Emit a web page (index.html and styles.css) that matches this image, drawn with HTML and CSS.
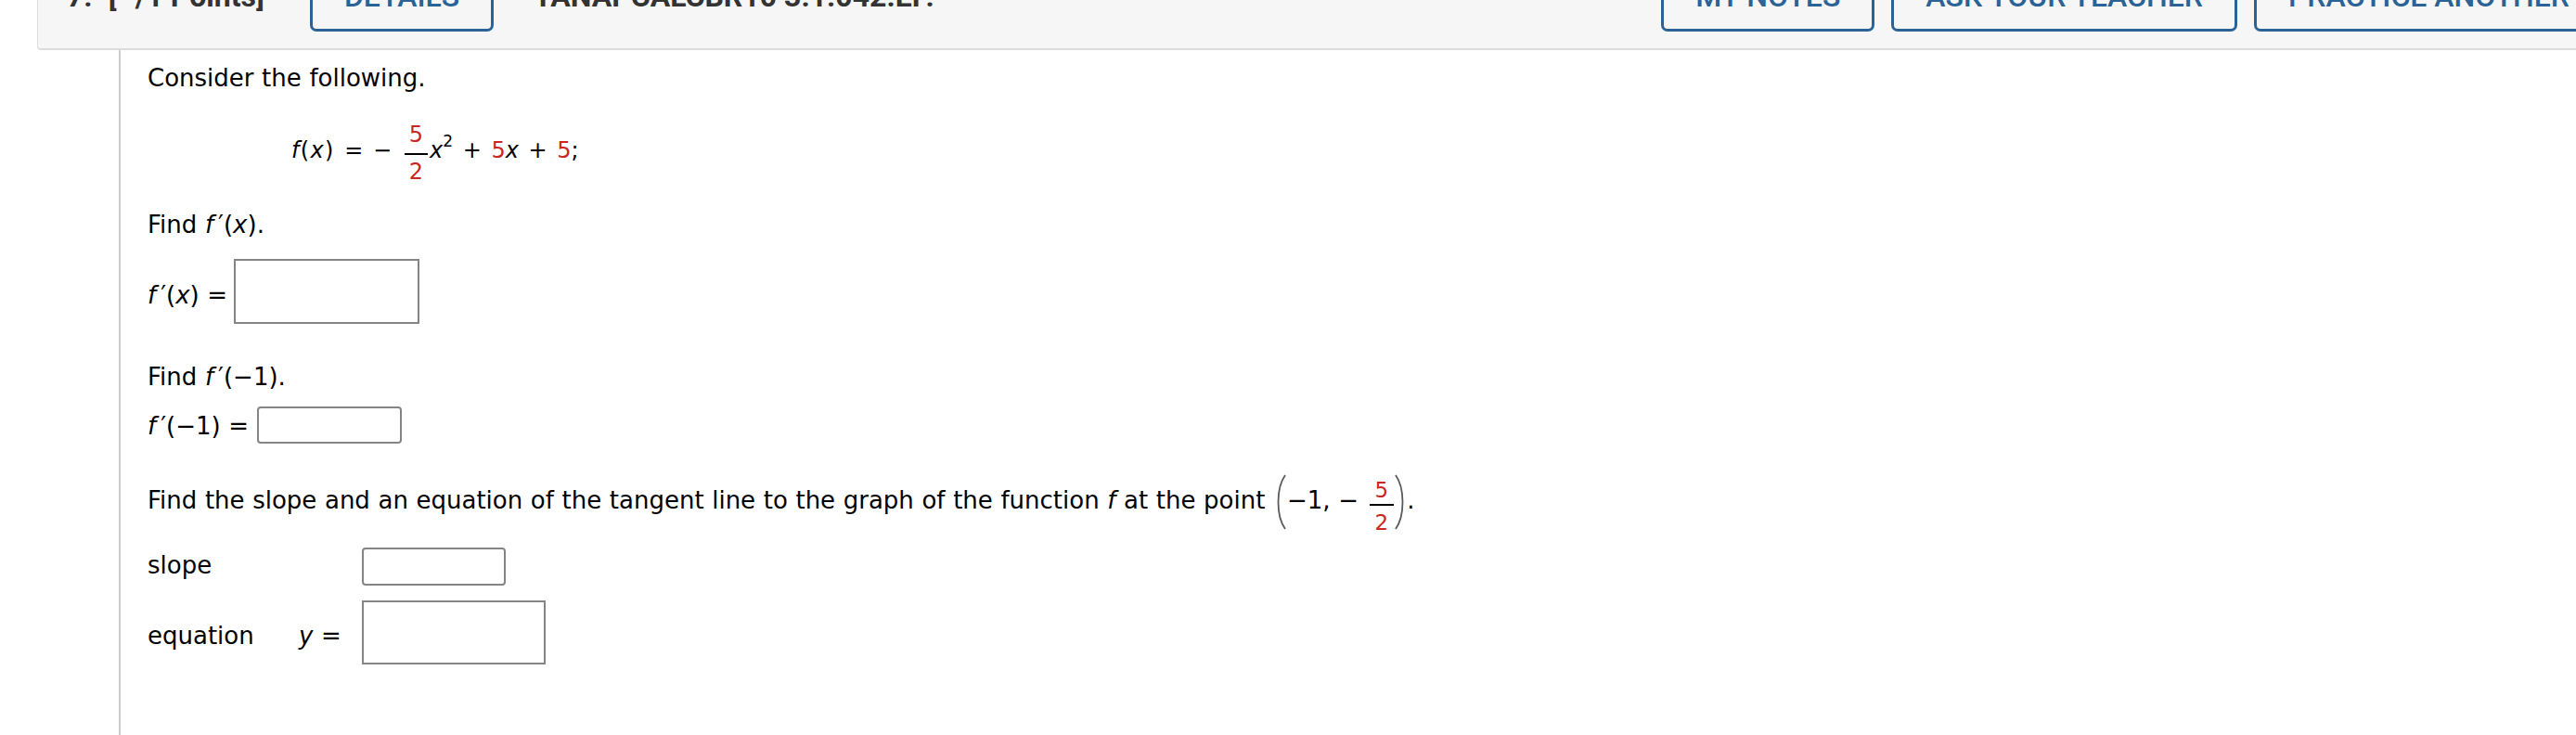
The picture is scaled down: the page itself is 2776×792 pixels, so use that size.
FILE: index.html
```html
<!DOCTYPE html>
<html lang="en">
<head>
<meta charset="utf-8">
<title>Question 7</title>
<link rel="stylesheet" href="styles.css">
</head>
<body>
<div class="page">
  <header class="qhead">
    <span class="qnum">7.</span>
    <span class="qpts">[–/1 Points]</span>
    <button class="hbtn hbtn-details" type="button">DETAILS</button>
    <span class="qid">TANAPCALCBR10 3.1.042.EP.</span>
    <div class="hactions">
      <button class="hbtn" type="button">MY NOTES</button>
      <button class="hbtn" type="button">ASK YOUR TEACHER</button>
      <button class="hbtn" type="button">PRACTICE ANOTHER</button>
    </div>
  </header>

  <main class="qbody">
    <p class="txt consider">Consider the following.</p>

    <p class="formula"><span class="fx"><i>f</i>(<i>x</i>)</span> = − <span class="frac"><span class="num red">5</span><span class="den red">2</span></span><i>x</i><sup class="sup">2</sup> + <span class="red">5</span><i>x</i> + <span class="red">5</span>;</p>

    <p class="txt find1">Find <i>f</i><span class="prime">′</span>(<i>x</i>).</p>

    <div class="ansrow row-fx">
      <span class="alabel lbl-fx"><i>f</i><span class="prime">′</span>(<i>x</i>) =</span>
      <input class="box box-fx" type="text" aria-label="f prime of x">
    </div>

    <p class="txt find2">Find <i>f</i><span class="prime">′</span>(−1).</p>

    <div class="ansrow row-f1">
      <span class="alabel lbl-f1"><i>f</i><span class="prime">′</span>(−1) =</span>
      <input class="box box-f1" type="text" aria-label="f prime of -1">
    </div>

    <p class="txt slopeq">Find the slope and an equation of the tangent line to the graph of the function <i>f</i> at the point <svg class="paren" width="15" height="60" viewBox="0 0 15 60" aria-hidden="true"><path d="M13 1 C3 15 3 45 13 59" fill="none" stroke="#5a5a5a" stroke-width="1.8"/></svg>−1, − <span class="frac frac-pt"><span class="num red">5</span><span class="den red">2</span></span><svg class="paren" width="14" height="60" viewBox="0 0 14 60" aria-hidden="true"><path d="M2 1 C12 15 12 45 2 59" fill="none" stroke="#5a5a5a" stroke-width="1.8"/></svg>.</p>

    <div class="answers">
      <span class="glabel lbl-slope">slope</span>
      <span class="gmid"></span>
      <input class="box box-slope" type="text" aria-label="slope">
      <span class="glabel lbl-eq">equation</span>
      <span class="gmid lbl-eq"><i>y</i> =</span>
      <input class="box box-eq" type="text" aria-label="equation">
    </div>
  </main>
</div>
</body>
</html>
```

FILE: styles.css
```css
html, body {
  margin: 0;
  padding: 0;
  background: #ffffff;
  overflow: hidden;
}

body {
  width: 2776px;
  height: 792px;
}

p {
  margin: 0;
}

.page {
  margin-top: -62px;
}

/* ---------- header ---------- */
.qhead {
  display: flex;
  align-items: center;
  box-sizing: border-box;
  width: 2786px;
  margin-left: 40px;
  padding: 20px 20px 18px 31px;
  background: #f6f6f6;
  border-left: 1px solid #dddddd;
  border-bottom: 2px solid #dcdcdc;
  border-bottom-left-radius: 4px;
  font-family: Roboto, "Liberation Sans", sans-serif;
  font-size: 32px;
  color: #333333;
}

.qnum,
.qpts,
.qid {
  font-weight: 700;
  white-space: nowrap;
}

.qpts {
  margin-left: 17px;
}

.qid {
  margin-left: 43px;
}

.hbtn {
  box-sizing: border-box;
  height: 76px;
  padding: 0 34px;
  margin: 0;
  border: 3px solid #2b6397;
  border-radius: 7px;
  background: transparent;
  color: #2b6397;
  font-family: Roboto, "Liberation Sans", sans-serif;
  font-size: 32px;
  font-weight: 500;
  white-space: nowrap;
}

.hbtn-details {
  margin-left: 49px;
}

.hactions {
  display: flex;
  gap: 18px;
  margin-left: auto;
}

/* ---------- question body ---------- */
.qbody {
  margin-left: 128px;
  min-height: 800px;
  padding: 14px 0 0 29px;
  border-left: 2px solid #cccccc;
  font-family: "DejaVu Sans", Verdana, sans-serif;
  font-size: 26px;
  line-height: 32px;
  word-spacing: 0.35px;
  color: #000000;
}

.red {
  color: #c9271f;
}

.prime {
  padding-left: 5px;
}

.find1 {
  margin-top: 31px;
}

.find2 {
  margin-top: 41px;
}

.slopeq {
  margin-top: 33px;
  white-space: nowrap;
}

/* formula line */
.formula {
  margin-top: 35px;
  padding-left: 155px;
  font-size: 24px;
  word-spacing: 3px;
  white-space: nowrap;
}

.fx {
  letter-spacing: 1.3px;
}

.frac {
  display: inline-flex;
  flex-direction: column;
  align-items: stretch;
  vertical-align: 17px;
  margin: 0 2px 0 3px;
  font-size: 24px;
  line-height: 20px;
  text-align: center;
  word-spacing: 0;
}

.frac .num {
  padding: 0 5px 10px;
}

.frac .den {
  padding: 8px 5px 0;
  border-top: 2px solid #000000;
}

.frac-pt {
  vertical-align: 12px;
  margin: 0 0 0 3px;
  font-size: 23px;
  line-height: 20px;
}

.frac-pt .num {
  padding: 0 6px 5px;
}

.frac-pt .den {
  padding: 8px 6px 0;
}

.sup {
  font-size: 17px;
  line-height: 0;
  vertical-align: 12px;
}

.paren {
  display: inline-block;
  vertical-align: -23px;
}

/* answer rows */
.ansrow {
  display: flex;
  align-items: flex-start;
}

.row-fx {
  margin-top: 21px;
}

.lbl-fx {
  margin-top: 23px;
}

.row-f1 {
  margin-top: 16px;
}

.lbl-f1 {
  margin-top: 5px;
}

.box {
  display: block;
  box-sizing: border-box;
  margin: 0;
  padding: 0 8px;
  border: 2px solid #858585;
  background: #ffffff;
  font-family: "DejaVu Sans", Verdana, sans-serif;
  font-size: 26px;
  outline: none;
}

.box-fx {
  width: 200px;
  height: 70px;
  margin-left: 7px;
}

.box-f1 {
  width: 156px;
  height: 40px;
  margin-left: 9px;
  border-radius: 4px;
}

.answers {
  display: grid;
  grid-template-columns: 163px 68px auto;
  justify-items: start;
  align-items: start;
  row-gap: 16px;
  margin-top: 17px;
}

.lbl-slope {
  margin-top: 3px;
}

.lbl-eq {
  margin-top: 22px;
}

.box-slope {
  width: 155px;
  height: 41px;
  border-radius: 4px;
}

.box-eq {
  width: 198px;
  height: 69px;
}
```
